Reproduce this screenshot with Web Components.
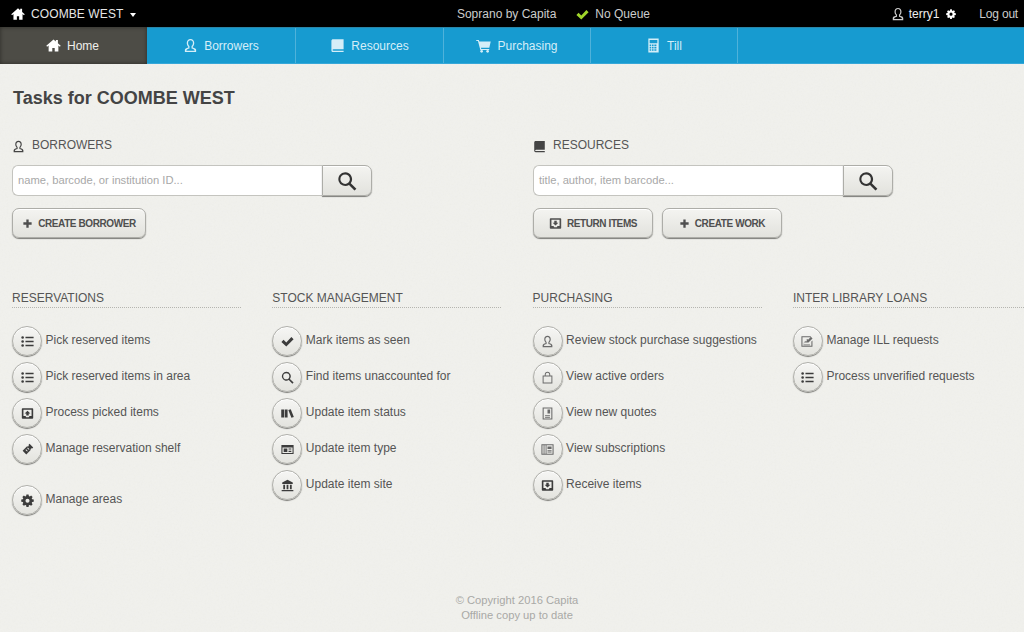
<!DOCTYPE html>
<html lang="en">
<head>
<meta charset="utf-8">
<title>Tasks for COOMBE WEST</title>
<style>
  html, body { margin: 0; height: 632px; overflow: hidden; }
  body {
    background: #eeeeea;
    font-family: "Liberation Sans", Arial, sans-serif;
    font-size: 12px;
    color: #555;
  }
</style>
</head>
<body>
<app-topbar></app-topbar>
<app-nav>
  <nav-item icon="home" width="147" active>Home</nav-item>
  <nav-item icon="user" width="149">Borrowers</nav-item>
  <nav-item icon="book" width="148">Resources</nav-item>
  <nav-item icon="cart" width="147">Purchasing</nav-item>
  <nav-item icon="calc" width="147">Till</nav-item>
</app-nav>
<main-page>
  <h-title slot="title">Tasks for COOMBE WEST</h-title>
  <search-panel slot="search" icon="user" heading="BORROWERS" placeholder="name, barcode, or institution ID...">
    <pill-button icon="plus" size="11" width="134">CREATE BORROWER</pill-button>
  </search-panel>
  <search-panel slot="search" icon="book" heading="RESOURCES" placeholder="title, author, item barcode...">
    <pill-button icon="inbox" size="13" width="120">RETURN ITEMS</pill-button>
    <pill-button icon="plus" size="11" width="120">CREATE WORK</pill-button>
  </search-panel>
  <task-column slot="tasks" heading="RESERVATIONS">
    <task-link icon="list">Pick reserved items</task-link>
    <task-link icon="list">Pick reserved items in area</task-link>
    <task-link icon="outbox">Process picked items</task-link>
    <task-link icon="ticket">Manage reservation shelf</task-link>
    <task-link icon="gear" spaced>Manage areas</task-link>
  </task-column>
  <task-column slot="tasks" heading="STOCK MANAGEMENT">
    <task-link icon="check">Mark items as seen</task-link>
    <task-link icon="search">Find items unaccounted for</task-link>
    <task-link icon="books">Update item status</task-link>
    <task-link icon="type">Update item type</task-link>
    <task-link icon="bank">Update item site</task-link>
  </task-column>
  <task-column slot="tasks" heading="PURCHASING">
    <task-link icon="user" light>Review stock purchase suggestions</task-link>
    <task-link icon="bag" light>View active orders</task-link>
    <task-link icon="quote" light>View new quotes</task-link>
    <task-link icon="subs" light>View subscriptions</task-link>
    <task-link icon="inbox">Receive items</task-link>
  </task-column>
  <task-column slot="tasks" heading="INTER LIBRARY LOANS">
    <task-link icon="edit" light>Manage ILL requests</task-link>
    <task-link icon="list">Process unverified requests</task-link>
  </task-column>
  <span slot="footer">© Copyright 2016 Capita</span>
  <span slot="footer">Offline copy up to date</span>
</main-page>

<script>
// icons, all drawn on a 16x16 box and filled with currentColor
const ICONS = {
  home: '<path d="M8 1.500 .3 8.300l.9 1L2.800 8v6.500h3.900v-3.800h2.600v3.800h3.900V8l1.600 1.300.9-1-3-2.600V2h-2.200v1.800z"/>',
  user: '<path fill-rule="evenodd" d="M8 1c-2.500 0-4 1.800-4 4.300 0 1.600.6 3 1.600 3.900v.8c-2 .5-3.600 1.300-3.600 2.600V15h12v-2.400c0-1.300-1.600-2.100-3.600-2.600v-.8c1-.9 1.600-2.300 1.600-3.900C12 2.800 10.500 1 8 1zm0 1.400c1.600 0 2.600 1.200 2.600 2.900 0 1.400-.6 2.700-1.500 3.300v2.500c1.600.3 3.200.9 3.400 2.500H3.500c.2-1.600 1.800-2.200 3.400-2.500V8.600C6 8 5.400 6.700 5.400 5.300 5.400 3.600 6.400 2.400 8 2.400z"/>',
  book: '<path d="M1.500 3c0-1.100.8-1.800 1.800-1.800H14.500V12H3.800c-.7 0-1.100.3-1.100.8s.4.800 1.100.800H14.500v1.400H3.300c-1 0-1.800-.7-1.800-1.800z"/>',
  cart: '<path d="M.3 2h2.700l.5 1.600H15.700l-1.500 6.900H5.300l.3 1.200h8.500v1.200H4.600L2.100 3.200H.3z"/><circle cx="6" cy="14.200" r="1.400"/><circle cx="12.400" cy="14.200" r="1.400"/>',
  calc: '<path fill-rule="evenodd" d="M2.500 .5h11v15h-11zm1.400 1.500v3.500h8.200V2zm0 5v1.700h1.700V7zm2.500 0v1.700h1.700V7zm2.500 0v1.700h2.200V7zm-5 2.500v1.700h1.700V9.500zm2.500 0v1.700h1.700V9.500zm2.500 0v1.700h2.200V9.500zM3.900 12v1.700h1.700V12zm2.500 0v1.700h1.700V12zm2.500 0v1.700h2.200V12z"/>',
  gear: '<path fill-rule="evenodd" d="M6.700 .5h2.600l.4 2 1.100.5 1.700-1.100 1.800 1.800-1.100 1.700.5 1.100 2 .4v2.600l-2 .4-.5 1.100 1.100 1.700-1.800 1.800-1.700-1.100-1.100.5-.4 2H6.700l-.4-2-1.100-.5-1.700 1.100-1.800-1.800 1.100-1.700-.5-1.100-2-.4V6.900l2-.4.5-1.100-1.100-1.700 1.800-1.800 1.700 1.100 1.100-.5zM8 5.700a2.500 2.500 0 1 0 0 5 2.500 2.500 0 0 0 0-5z"/>',
  plus: '<path d="M6.300 2h3.400v4.300H14v3.400H9.700V14H6.300V9.700H2V6.300h4.300z"/>',
  inbox: '<path fill-rule="evenodd" d="M2 1.500h12a1 1 0 0 1 1 1v11a1 1 0 0 1-1 1H2a1 1 0 0 1-1-1v-11a1 1 0 0 1 1-1zm1 2V11h2.500l1 1.500h3l1-1.500H13V3.500zM6.500 4.500h3V7h2L8 10.500 4.500 7h2z"/>',
  outbox: '<path fill-rule="evenodd" d="M2 1.500h12a1 1 0 0 1 1 1v11a1 1 0 0 1-1 1H2a1 1 0 0 1-1-1v-11a1 1 0 0 1 1-1zm1 2V11h2.500l1 1.500h3l1-1.500H13V3.500zM8 4.500 11.500 8h-2v2.500h-3V8h-2z"/>',
  list: '<circle cx="2" cy="3" r="1.600"/><circle cx="2" cy="8" r="1.600"/><circle cx="2" cy="13" r="1.600"/><path d="M5.500 2.100H15.500v1.800H5.500zM5.500 7.100H15.500v1.800H5.500zM5.500 12.100H15.500v1.800H5.500z"/>',
  ticket: '<path fill-rule="evenodd" d="M10.500 1 15 5.500l-1.200 1.200a1.400 1.400 0 0 0-1.900 1.900L6.500 14 2 9.500l5.500-5.400a1.400 1.400 0 0 0 1.900-1.900zM8.400 5.600l-.8.800 2 2 .8-.8zM6.300 7.700l-.8.800 2 2 .8-.8z"/>',
  check: '<path d="M.5 8.500 3.200 5.800l3.300 3.300L12.800 2.500 15.500 5.200 6.500 14z"/>',
  search: '<path fill-rule="evenodd" d="M6.500 1a5.500 5.500 0 0 1 4.500 8.700l4.500 4.400-1.500 1.500-4.400-4.500A5.500 5.500 0 1 1 6.500 1zm0 1.700a3.800 3.800 0 1 0 0 7.600 3.800 3.800 0 0 0 0-7.600z"/>',
  books: '<path d="M.3 3h3.500v10H.3zM4.600 3h3.500v10H4.600zM9 3.800l3-1 3.800 9.400-3 1.100z"/>',
  type: '<path fill-rule="evenodd" d="M.5 2.500h15v11H.5zm1.300 3v6.800h12.400V5.500zM3.300 6.800h4.500v4.200H3.300zm6 0h3.400v1.300H9.300zm0 2.800h3.400v1.400H9.300z"/>',
  bank: '<path d="M8 .8 14.500 4.300v1.700H1.500V4.300zM2.800 7h2.200v5.500H2.800zM6.900 7h2.200v5.500H6.900zM11 7h2.200v5.500H11zM.8 13.500h14.400v1.700H.8z"/>',
  bag: '<path fill-rule="evenodd" d="M8 .8c-2.100 0-3.400 1.500-3.400 3.700v1H2V15.500h12V5.500h-2.600v-1C11.400 2.300 10.100.8 8 .8zm0 1.200c1.400 0 2.200 1 2.200 2.500v1H5.800v-1C5.800 3 6.600 2 8 2zM3.200 6.700h9.600v7.600H3.200z"/>',
  quote: '<path fill-rule="evenodd" d="M2 .5h12v15H2zm1.300 1.300v12.400h9.400V1.800zM5 10h6v1.100H5zm0 2h6v1.100H5zM8 3h3.200v5H8z"/>',
  subs: '<path fill-rule="evenodd" d="M.5 1.500h15v13H.5zm1.300 1.300v10.400h1.400V2.800zm2.500 0v10.400h1.400V2.800zm2.500 0v10.400h7.400V2.800zM8 4.200h5v3.200H8zM8 8.500h5v1.100H8zm0 2.100h5v1.100H8z"/>',
  edit: '<path fill-rule="evenodd" d="M.5 1.500h12l-1.300 1.300H1.800v10.400h11V8l1.300-1.300v7.800H.5zM3.500 11l1.500-3.800 1 1L7.500 7l-1-1 1.200-1.200 1 1 3.500-3.500 2 2L9.200 9.300H3.500zM3 11.700h8v1H3z"/>'
};

class IcOn extends HTMLElement {
  connectedCallback() {
    const name = this.getAttribute('name');
    const size = this.getAttribute('size') || 16;
    this.attachShadow({ mode: 'open' }).innerHTML = `
      <style>
        :host { display: inline-flex; flex: none; }
        svg { display: block; fill: currentColor; }
      </style>
      <svg width="${size}" height="${size}" viewBox="0 0 16 16" aria-hidden="true">${ICONS[name] || ''}</svg>`;
  }
}
customElements.define('ic-on', IcOn);

class AppTopbar extends HTMLElement {
  connectedCallback() {
    this.attachShadow({ mode: 'open' }).innerHTML = `
      <style>
        :host {
          display: grid;
          grid-template-columns: 1fr auto 1fr;
          align-items: center;
          height: 27px;
          background: #000;
          color: #ccc;
          font-size: 12px;
          padding: 0 6px 0 11px;
        }
        .site { display: flex; align-items: center; color: #e6e6e6; }
        .site ic-on { color: #fff; margin-right: 6px; }
        .site span { letter-spacing: .1px; }
        .caret {
          width: 0; height: 0; margin: 2px 0 0 7px;
          border: 3px solid transparent; border-top: 4px solid #fff; border-bottom: 0;
        }
        .mid { display: flex; align-items: center; margin-left: 78px; }
        .mid ic-on { color: #9fd52a; margin: 1px 6px 0 20px; }
        .right { display: flex; align-items: center; justify-content: flex-end; }
        .who { color: #eee; margin: 0 7px 0 4px; }
        .gear { color: #fff; }
        .out { margin-left: 23px; letter-spacing: -.2px; }
      </style>
      <div class="site"><ic-on name="home" size="14"></ic-on><span>COOMBE WEST</span><i class="caret"></i></div>
      <div class="mid"><span>Soprano by Capita</span><ic-on name="check" size="13"></ic-on><span>No Queue</span></div>
      <div class="right"><ic-on name="user" size="14"></ic-on><span class="who">terry1</span><ic-on class="gear" name="gear" size="10"></ic-on><span class="out">Log out</span></div>`;
  }
}
customElements.define('app-topbar', AppTopbar);

class AppNav extends HTMLElement {
  connectedCallback() {
    this.attachShadow({ mode: 'open' }).innerHTML = `
      <style>
        :host {
          display: flex;
          height: 37px;
          box-sizing: border-box;
          background: #179bd0;
          border-top: 1px solid #2a86a8;
          border-bottom: 1px solid #36a7d8;
        }
      </style>
      <slot></slot>`;
  }
}
customElements.define('app-nav', AppNav);

class NavItem extends HTMLElement {
  connectedCallback() {
    const icon = this.getAttribute('icon');
    const w = this.getAttribute('width');
    this.attachShadow({ mode: 'open' }).innerHTML = `
      <style>
        :host {
          display: flex;
          align-items: center;
          justify-content: center;
          gap: 6px;
          box-sizing: border-box;
          width: ${w}px;
          color: #d5eef8;
          font-size: 12px;
          border-right: 1px solid #4fb2da;
        }
        :host([active]) {
          color: #f0efea;
          background: #4d4c46;
          border-right: 0;
          box-shadow: inset 0 0 4px #2c2b27;
          margin: -1px 0;
          padding-right: 2px;
        }
        :host([active]) ic-on { color: #fff; }
      </style>
      <ic-on name="${icon}" size="15"></ic-on><slot></slot>`;
  }
}
customElements.define('nav-item', NavItem);

class HTitle extends HTMLElement {
  connectedCallback() {
    this.attachShadow({ mode: 'open' }).innerHTML = `
      <style>
        :host { display: block; font-size: 18px; font-weight: bold; color: #444; line-height: 22px; }
      </style>
      <slot></slot>`;
  }
}
customElements.define('h-title', HTitle);

class PillButton extends HTMLElement {
  connectedCallback() {
    const w = this.getAttribute('width');
    const size = this.getAttribute('size');
    this.attachShadow({ mode: 'open' }).innerHTML = `
      <style>
        :host {
          display: flex;
          align-items: center;
          justify-content: center;
          gap: 5px;
          box-sizing: border-box;
          width: ${w}px;
          height: 30px;
          border: 1px solid #adada8;
          border-radius: 7px;
          background: linear-gradient(#f4f4f1, #e2e2dd);
          box-shadow: inset 0 1px 0 #fff, 0 1px 1px #7c7c78;
          color: #4f4f4f;
          font-size: 10px;
          font-weight: bold;
          letter-spacing: -.4px;
        }
      </style>
      <ic-on name="${this.getAttribute('icon')}" size="${size}"></ic-on><slot></slot>`;
  }
}
customElements.define('pill-button', PillButton);

class SearchPanel extends HTMLElement {
  connectedCallback() {
    const icon = this.getAttribute('icon');
    this.attachShadow({ mode: 'open' }).innerHTML = `
      <style>
        :host { display: block; }
        .head { display: flex; align-items: center; gap: 7px; height: 16px; font-size: 12px; color: #555; }
        .head ic-on { color: #444; margin-top: 3px; }
        .box {
          display: flex;
          width: 360px;
          height: 31px;
          margin: 12px 0 12px;
        }
        .field {
          flex: 1;
          box-sizing: border-box;
          background: #fff;
          border: 1px solid #c4c4bf;
          border-right: 0;
          border-radius: 6px 0 0 6px;
          padding-left: 5px;
          line-height: 29px;
          color: #a8a8a8;
          font-size: 11.200px;
        }
        .go {
          display: flex;
          align-items: center;
          justify-content: center;
          width: 50px;
          box-sizing: border-box;
          border: 1px solid #adada8;
          border-radius: 0 7px 7px 0;
          background: linear-gradient(#f4f4f1, #e2e2dd);
          box-shadow: inset 0 1px 0 #fff, 0 1px 1px #7c7c78;
          color: #333;
        }
        .actions { display: flex; gap: 9px; }
      </style>
      <div class="head"><ic-on name="${icon}" size="13"></ic-on><span>${this.getAttribute('heading')}</span></div>
      <div class="box">
        <div class="field">${this.getAttribute('placeholder')}</div>
        <div class="go"><ic-on name="search" size="20"></ic-on></div>
      </div>
      <div class="actions"><slot></slot></div>`;
  }
}
customElements.define('search-panel', SearchPanel);

class TaskColumn extends HTMLElement {
  connectedCallback() {
    this.attachShadow({ mode: 'open' }).innerHTML = `
      <style>
        :host { display: block; }
        h2 {
          margin: 0 0 18px;
          padding-top: 5px;
          height: 16px;
          font-size: 12px;
          line-height: 15px;
          font-weight: normal;
          color: #555;
          border-bottom: 1px dotted #b5b5b0;
        }
        .rows { display: flex; flex-direction: column; gap: 6px; }
      </style>
      <h2>${this.getAttribute('heading')}</h2>
      <div class="rows"><slot></slot></div>`;
  }
}
customElements.define('task-column', TaskColumn);

class TaskLink extends HTMLElement {
  connectedCallback() {
    this.attachShadow({ mode: 'open' }).innerHTML = `
      <style>
        :host { display: flex; align-items: center; gap: 3.500px; height: 30px; font-size: 12px; color: #555; white-space: nowrap; }
        :host([spaced]) { margin-top: 15px; }
        .disc {
          display: flex;
          align-items: center;
          justify-content: center;
          box-sizing: border-box;
          width: 30px;
          height: 30px;
          border: 1px solid #b0b0ab;
          border-radius: 50%;
          background: linear-gradient(#f6f6f4, #e3e3de);
          box-shadow: inset 0 1px 0 #fff, 0 1px 1px #7c7c78;
          color: #3c3c3c;
        }
        :host([light]) .disc { color: #6a6a6a; }
        span { margin-top: -2px; }
      </style>
      <div class="disc"><ic-on name="${this.getAttribute('icon')}" size="13"></ic-on></div>
      <span><slot></slot></span>`;
  }
}
customElements.define('task-link', TaskLink);

// faint paper grain behind the page, an svg noise filter and no image file
const GRAIN = "url(\"data:image/svg+xml,%3Csvg xmlns='http://www.w3.org/2000/svg' width='256' height='256'%3E%3Cfilter id='n'%3E%3CfeTurbulence type='fractalNoise' baseFrequency='.55' numOctaves='2' stitchTiles='stitch'/%3E%3CfeColorMatrix values='0 0 0 0 .45 0 0 0 0 .45 0 0 0 0 .42 0 0 0 .08 0'/%3E%3C/filter%3E%3Crect width='256' height='256' filter='url(%23n)'/%3E%3C/svg%3E\")";

class MainPage extends HTMLElement {
  connectedCallback() {
    this.attachShadow({ mode: 'open' }).innerHTML = `
      <style>
        :host {
          display: flex;
          flex-direction: column;
          height: 568px;
          box-sizing: border-box;
          padding: 23px 0 0 12px;
          background: #f2f2ee ${GRAIN};
        }
        .title { padding-left: 1px; margin-bottom: 28px; }
        .search { display: grid; grid-template-columns: 521px 1fr; margin-bottom: 48px; }
        .tasks { display: grid; grid-template-columns: 229px 229px 229px 231px; column-gap: 31.300px; }
        .foot {
          display: flex;
          flex-direction: column;
          align-items: center;
          margin: auto 0 9px -12px;
          padding-left: 10px;
          line-height: 15px;
          color: #a9a9a6;
          font-size: 11.200px;
        }
      </style>
      <div class="title"><slot name="title"></slot></div>
      <div class="search"><slot name="search"></slot></div>
      <div class="tasks"><slot name="tasks"></slot></div>
      <div class="foot"><slot name="footer"></slot></div>`;
  }
}
customElements.define('main-page', MainPage);
</script>
</body>
</html>
